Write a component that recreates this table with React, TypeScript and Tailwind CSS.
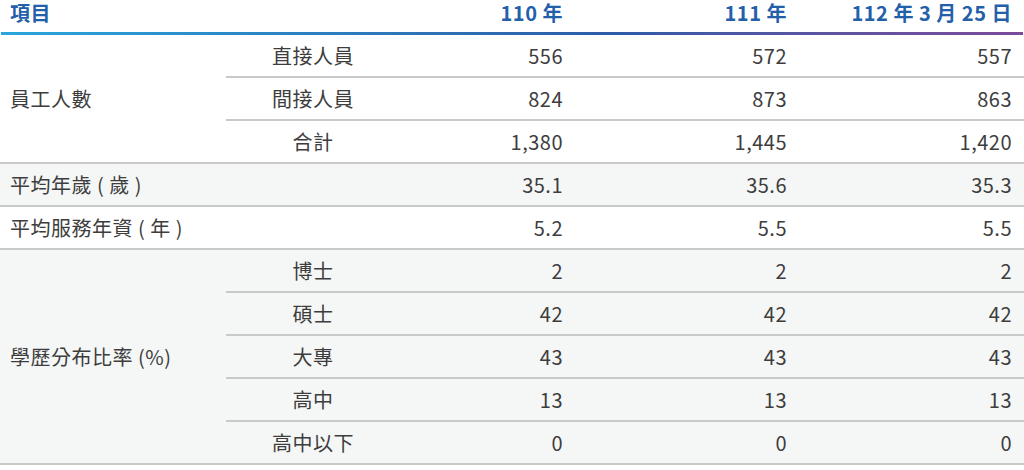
import React from "react";

const font = { fontFamily: '"Noto Sans CJK TC", "Noto Sans", sans-serif' };

type Sub = { label: string; v: [string, string, string] };

function Values({ v }: { v: [string, string, string] }) {
  return (
    <>
      <div className="w-[176px] pr-[11px] text-right">{v[0]}</div>
      <div className="w-[224px] pr-[11px] text-right">{v[1]}</div>
      <div className="w-[226px] pr-[12px] text-right">{v[2]}</div>
    </>
  );
}

function Group({ label, subs, gray }: { label: string; subs: Sub[]; gray?: boolean }) {
  return (
    <div className={`flex ${gray ? "bg-[#f5f7f6]" : "bg-white"}`}>
      <div className="flex w-[226px] shrink-0 items-center border-b-2 border-[#c9c9c9] pl-[10px]">{label}</div>
      <div className="flex flex-1 flex-col">
        {subs.map((s) => (
          <div key={s.label} className="flex h-[43px] items-center border-b-2 border-[#c9c9c9]">
            <div className="w-[172px] pl-[2px] text-center">{s.label}</div>
            <Values v={s.v} />
          </div>
        ))}
      </div>
    </div>
  );
}

function Single({ label, v, gray }: { label: string; v: [string, string, string]; gray?: boolean }) {
  return (
    <div className={`flex h-[43px] items-center border-b-2 border-[#c9c9c9] ${gray ? "bg-[#f5f7f6]" : "bg-white"}`}>
      <div className="w-[398px] pl-[10px]">{label}</div>
      <Values v={v} />
    </div>
  );
}

export default function App() {
  return (
    <div className="h-[470px] w-[1024px] bg-white text-[20px] tracking-[0.5px] text-[#3d3d3d]" style={font}>
      <div className="flex h-[32px] items-center pb-[6px] font-bold text-[#2460a9]">
        <div className="w-[398px] pl-[10px]">項目</div>
        <div className="w-[176px] pr-[11px] text-right">110 年</div>
        <div className="w-[224px] pr-[11px] text-right">111 年</div>
        <div className="w-[226px] pr-[12px] text-right">112 年 3 月 25 日</div>
      </div>
      <div className="mx-[1px] h-[3px] bg-linear-to-r from-[#29a6dc] via-[#2c5ba7] via-60% to-[#7b4a9b]" />
      <Group
        label="員工人數"
        subs={[
          { label: "直接人員", v: ["556", "572", "557"] },
          { label: "間接人員", v: ["824", "873", "863"] },
          { label: "合計", v: ["1,380", "1,445", "1,420"] },
        ]}
      />
      <Single label="平均年歲 ( 歲 )" v={["35.1", "35.6", "35.3"]} gray />
      <Single label="平均服務年資 ( 年 )" v={["5.2", "5.5", "5.5"]} />
      <Group
        label="學歷分布比率 (%)"
        gray
        subs={[
          { label: "博士", v: ["2", "2", "2"] },
          { label: "碩士", v: ["42", "42", "42"] },
          { label: "大專", v: ["43", "43", "43"] },
          { label: "高中", v: ["13", "13", "13"] },
          { label: "高中以下", v: ["0", "0", "0"] },
        ]}
      />
    </div>
  );
}
